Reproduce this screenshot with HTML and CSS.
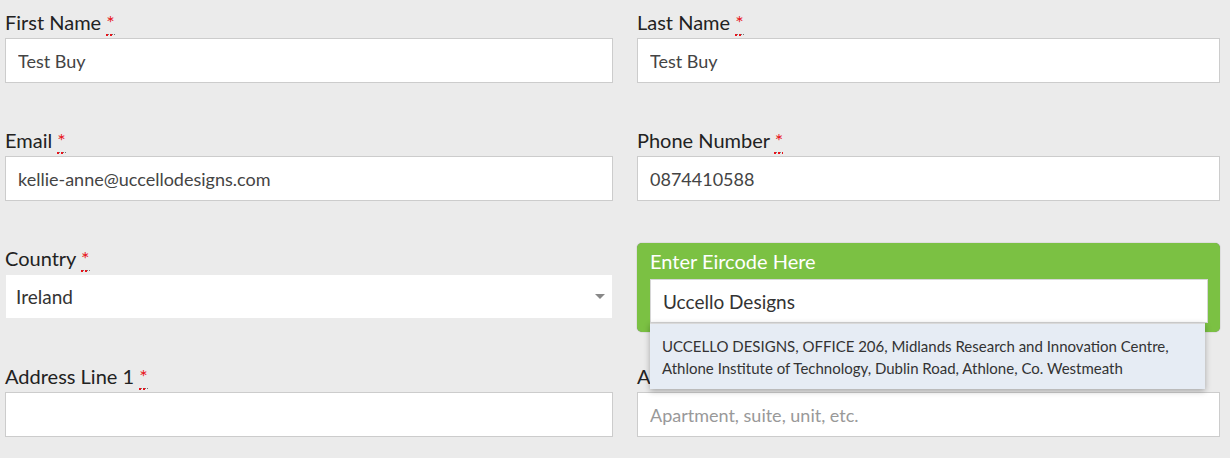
FILE: index.html
```html
<!DOCTYPE html>
<html lang="en">
<head>
<meta charset="utf-8">
<title>Checkout details</title>
<link rel="stylesheet" href="styles.css">
</head>
<body>
<form class="form">
  <div class="field">
    <label class="label">First Name <abbr class="req" title="required">*</abbr></label>
    <input class="input" type="text" value="Test Buy">
  </div>
  <div class="field">
    <label class="label">Last Name <abbr class="req" title="required">*</abbr></label>
    <input class="input" type="text" value="Test Buy">
  </div>
  <div class="field">
    <label class="label">Email <abbr class="req" title="required">*</abbr></label>
    <input class="input" type="text" value="kellie-anne@uccellodesigns.com">
  </div>
  <div class="field">
    <label class="label">Phone Number <abbr class="req" title="required">*</abbr></label>
    <input class="input" type="text" value="0874410588">
  </div>
  <div class="field">
    <label class="label">Country <abbr class="req" title="required">*</abbr></label>
    <div class="select">
      <span class="select-value">Ireland</span>
      <span class="select-arrow"></span>
    </div>
  </div>
  <div class="field field-eircode">
    <div class="eircode">
      <div class="eircode-title">Enter Eircode Here</div>
      <div class="eircode-wrap">
        <input class="input eircode-input" type="text" value="Uccello Designs">
        <div class="pac">
          <div class="pac-item">UCCELLO DESIGNS, OFFICE 206, Midlands Research and Innovation Centre, Athlone Institute of Technology, Dublin Road, Athlone, Co. Westmeath</div>
        </div>
      </div>
    </div>
  </div>
  <div class="field">
    <label class="label">Address Line 1 <abbr class="req" title="required">*</abbr></label>
    <input class="input" type="text" value="">
  </div>
  <div class="field field-under">
    <label class="label">Address Line 2</label>
    <input class="input" type="text" placeholder="Apartment, suite, unit, etc.">
  </div>
</form>
</body>
</html>
```
FILE: styles.css
```css
html, body {
  margin: 0;
  padding: 0;
  background: #ebebeb;
}

body {
  font-family: Lato, "Noto Sans", sans-serif;
  color: #222;
}

.form {
  display: grid;
  grid-template-columns: 608px 583px;
  grid-auto-rows: 75px;
  column-gap: 24px;
  row-gap: 43px;
  padding: 8px 0 0 5px;
}

.field {
  display: flex;
  flex-direction: column;
  min-width: 0;
}

.label {
  display: block;
  height: 30px;
  line-height: 28px;
  font-size: 20px;
  color: #222;
  white-space: nowrap;
}

.req {
  color: #e8141b;
  font-size: 20px;
  text-decoration: underline dotted #e8141b;
  text-decoration-thickness: 2px;
  text-underline-offset: 4px;
  border-bottom: 1px dotted #777;
  cursor: help;
}

.input {
  box-sizing: border-box;
  display: block;
  width: 100%;
  height: 45px;
  margin: 0;
  padding: 0 12px;
  border: 1px solid #cccccc;
  border-radius: 0;
  background: #fff;
  font-family: Lato, "Noto Sans", sans-serif;
  font-size: 18px;
  color: #444;
  outline: none;
}

.input::placeholder {
  color: #999;
}

.select {
  box-sizing: border-box;
  height: 45px;
  border: 1px solid #ebebeb;
  background: #fff;
  background-clip: padding-box;
  display: flex;
  align-items: center;
  justify-content: space-between;
  padding: 0 7px 0 10px;
}

.select-value {
  font-size: 19px;
  color: #333;
}

.select-arrow {
  width: 0;
  height: 0;
  border-left: 5px solid transparent;
  border-right: 5px solid transparent;
  border-top: 5px solid #888;
}

.field-eircode {
  position: relative;
  z-index: 2;
}

.eircode {
  box-sizing: border-box;
  margin-top: -1px;
  height: 89px;
  padding: 5px 12px 9px 13px;
  background: #7bc143;
  border-radius: 5px;
  box-shadow: 0 0 1px 0 rgba(0, 0, 0, 0.55);
}

.eircode-title {
  font-size: 20px;
  line-height: 26px;
  color: #fff;
  margin-bottom: 5px;
}

.eircode-wrap {
  position: relative;
}

.eircode-input {
  height: 44px;
  border-color: #d6d6d6;
  font-size: 19px;
  color: #333;
}

.pac {
  position: absolute;
  top: 100%;
  left: 0;
  width: 555px;
  background: #e6ecf4;
  border-top: 1px solid #d9d9d9;
  box-shadow: 0 2px 6px rgba(0, 0, 0, 0.3);
}

.pac-item {
  padding: 11px 12px 10px 12px;
  font-size: 15px;
  line-height: 22px;
  color: #333;
}
```
